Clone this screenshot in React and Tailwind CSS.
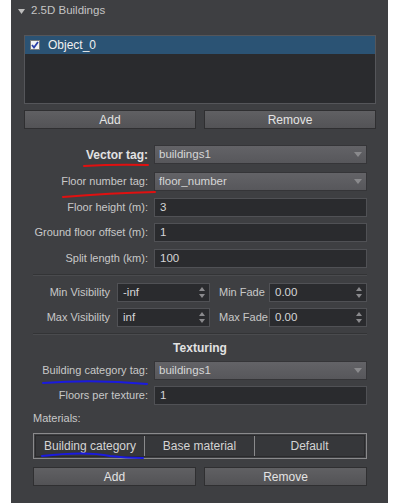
import React from 'react';

// 2.5D Buildings property panel
const FONT = "font-['Liberation_Sans',Arial,sans-serif]";

function Arrow() {
  return (
    <svg width="8" height="5" viewBox="0 0 8 5" className="shrink-0">
      <path d="M0 0 L8 0 L4 5 Z" fill="#8a8a8d" />
    </svg>
  );
}

function Spinner() {
  return (
    <div className="flex flex-col gap-[3px] mr-[4px]">
      <svg width="6" height="4" viewBox="0 0 6 4"><path d="M0 4 L6 4 L3 0 Z" fill="#8a8a8d" /></svg>
      <svg width="6" height="4" viewBox="0 0 6 4"><path d="M0 0 L6 0 L3 4 Z" fill="#8a8a8d" /></svg>
    </div>
  );
}

function Combo({ value }) {
  return (
    <div className="flex-1 h-[19px] flex items-center justify-between pl-[4px] pr-[4px] bg-gradient-to-b from-[#636367] to-[#57575b] border border-[#353538] text-[#d6d6d6] text-[11.5px]">
      <span>{value}</span>
      <Arrow />
    </div>
  );
}

function Input({ value, spin }) {
  return (
    <div className="flex-1 h-[19px] flex items-center justify-between pl-[5px] bg-[#2a2b2e] border border-[#505155] text-[#d6d6d6] text-[11.5px]">
      <span>{value}</span>
      {spin && <Spinner />}
    </div>
  );
}

function Row({ label, bold, children, className }) {
  return (
    <div className={'flex items-center ' + className}>
      <div className={'w-[115px] shrink-0 text-right whitespace-nowrap ' + (bold ? 'text-[12px] font-bold text-[#e2e2e2]' : 'text-[11px] text-[#c8c8c8]')}>
        {label}
      </div>
      <div className="w-[6px] shrink-0" />
      {children}
    </div>
  );
}

function Button({ children }) {
  return (
    <div className="flex-1 h-[19px] flex items-center justify-center bg-gradient-to-b from-[#606063] to-[#535356] border border-[#2f2f31] text-[#e4e4e4] text-[12px]">
      {children}
    </div>
  );
}

function Separator({ className }) {
  return (
    <div className={className}>
      <div className="h-px bg-[#333436]" />
      <div className="h-px bg-[#4a4b4e]" />
    </div>
  );
}

export default function App() {
  return (
    <div className={'relative w-[397px] h-[503px] bg-white ' + FONT}>
      <div className="ml-[11px] w-[377px] h-[503px] bg-[#3e3f42]">
        {/* header */}
        <div className="h-[22px] flex items-center pl-[7px] text-[#c4c4c4] text-[11.5px]">
          <svg width="7" height="5" viewBox="0 0 7 5"><path d="M0 0 L7 0 L3.5 5 Z" fill="#bdbdbd" /></svg>
          <span className="ml-[6px]">2.5D Buildings</span>
        </div>

        {/* object list */}
        <div className="mt-[13px] mx-[13px] mr-[12px] h-[69px] bg-[#2a2b2e] border border-[#55565a]">
          <div className="h-[18px] bg-[#2b5374] flex items-center pl-[5px]">
            <div className="w-[10px] h-[10px] bg-[#f2f2f2] border border-[#7a7a7a] flex items-center justify-center">
              <svg width="8" height="8" viewBox="0 0 8 8"><path d="M1 4 L3 6.5 L7 1" stroke="#2a3fa8" strokeWidth="1.8" fill="none" /></svg>
            </div>
            <span className="ml-[8px] text-[12px] text-[#f0f0f0]">Object_0</span>
          </div>
        </div>

        <div className="mt-[6px] mx-[13px] mr-[12px] flex gap-[8px]">
          <Button>Add</Button>
          <Button>Remove</Button>
        </div>

        {/* tags and heights */}
        <div className="pl-[22px] pr-[21px]">
          <Row label="Vector tag:" bold className="mt-[16px]"><Combo value="buildings1" /></Row>
          <Row label="Floor number tag:" className="mt-[8px]"><Combo value="floor_number" /></Row>
          <Row label="Floor height (m):" className="mt-[7px]"><Input value="3" /></Row>
          <Row label="Ground floor offset (m):" className="mt-[6px]"><Input value="1" /></Row>
          <Row label="Split length (km):" className="mt-[7px]"><Input value="100" /></Row>

          <Separator className="mt-[6px]" />

          <div className="mt-[7px] flex items-center text-[11px] text-[#c8c8c8]">
            <div className="w-[77px] text-right whitespace-nowrap">Min Visibility</div>
            <div className="w-[7px]" />
            <div className="w-[93px] flex"><Input value="-inf" spin /></div>
            <div className="w-[9px]" />
            <div className="w-[50px] whitespace-nowrap">Min Fade</div>
            <div className="flex-1 flex"><Input value="0.00" spin /></div>
          </div>
          <div className="mt-[6px] flex items-center text-[11px] text-[#c8c8c8]">
            <div className="w-[77px] text-right whitespace-nowrap">Max Visibility</div>
            <div className="w-[7px]" />
            <div className="w-[93px] flex"><Input value="inf" spin /></div>
            <div className="w-[9px]" />
            <div className="w-[50px] whitespace-nowrap">Max Fade</div>
            <div className="flex-1 flex"><Input value="0.00" spin /></div>
          </div>

          <Separator className="mt-[6px]" />

          {/* texturing */}
          <div className="mt-[6px] h-[14px] flex items-center justify-center text-[12px] font-bold text-[#e2e2e2]">Texturing</div>
          <Row label="Building category tag:" className="mt-[6px]"><Combo value="buildings1" /></Row>
          <Row label="Floors per texture:" className="mt-[6px]"><Input value="1" /></Row>

          <div className="mt-[6px] h-[14px] flex items-center text-[11px] text-[#c8c8c8]">Materials:</div>

          <div className="mt-[8px] h-[26px] border border-[#8a8a8c] p-px flex">
            <div className="flex-1 flex border border-[#2a2a2c] bg-[#36373a] text-[12px] text-[#d4d4d4]">
              <div className="w-[109px] flex items-center justify-center border-r border-[#8a8a8c]">Building category</div>
              <div className="w-[110px] flex items-center justify-center border-r border-[#8a8a8c]">Base material</div>
              <div className="flex-1 flex items-center justify-center">Default</div>
            </div>
          </div>

          <div className="mt-[8px] flex gap-[8px]">
            <Button>Add</Button>
            <Button>Remove</Button>
          </div>
        </div>
      </div>

      {/* hand-drawn annotations */}
      <svg className="absolute left-0 top-0 pointer-events-none" width="397" height="503" viewBox="0 0 397 503">
        <path d="M84 166 Q116 164 148 165" stroke="#e01010" strokeWidth="2" fill="none" strokeLinecap="round" />
        <path d="M63 197 Q110 193 155 192" stroke="#e01010" strokeWidth="2" fill="none" strokeLinecap="round" />
        <path d="M43 383 Q95 379 147 384" stroke="#1a1ae0" strokeWidth="2" fill="none" strokeLinecap="round" />
        <path d="M42 456 Q86 451 110 456 Q126 458 143 458" stroke="#1a1ae0" strokeWidth="2" fill="none" strokeLinecap="round" />
      </svg>
    </div>
  );
}
